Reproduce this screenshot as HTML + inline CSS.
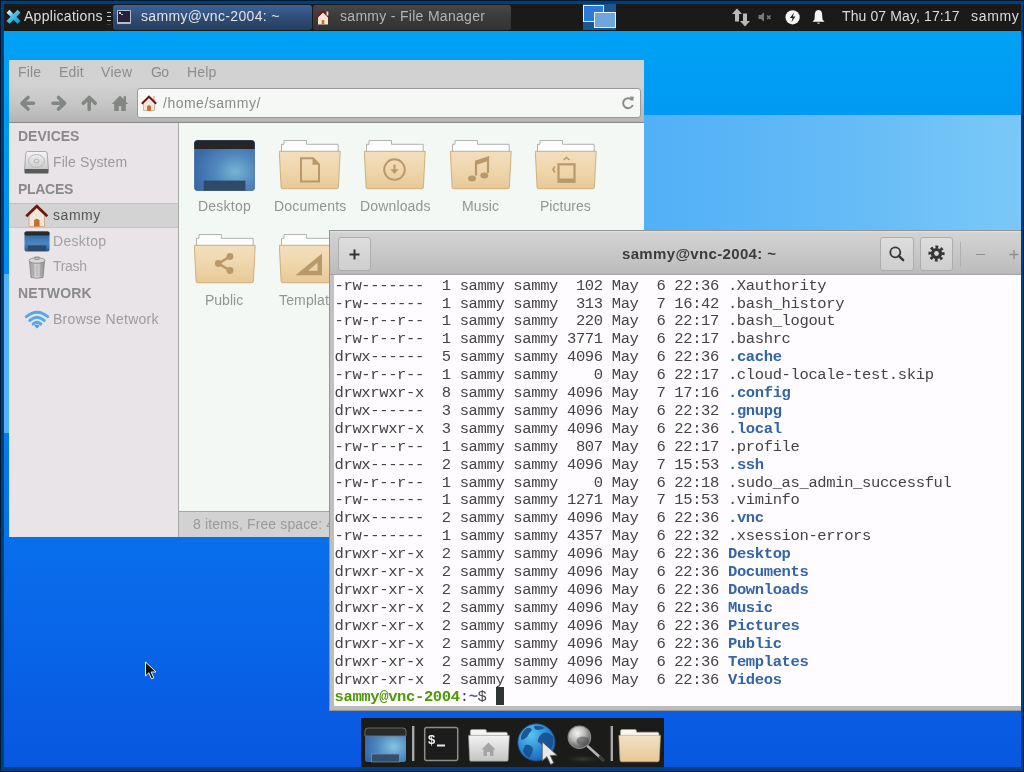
<!DOCTYPE html>
<html><head><meta charset="utf-8">
<style>
*{margin:0;padding:0;box-sizing:border-box}
html,body{width:1024px;height:772px;overflow:hidden;background:#001a33}
body{position:relative;font-family:"Liberation Sans",sans-serif}
.abs{position:absolute}
.ftxt{position:absolute;white-space:nowrap;line-height:15px;font-size:14px;letter-spacing:0.2px}
#frame{position:absolute;left:1px;top:1px;width:1022px;height:770px;background:#003f7e}
#desk{position:absolute;left:4px;top:4px;width:1017px;height:763px;background:linear-gradient(#00a2f5 0px,#00a2f5 27px,#0870ec 533px,#0857e0 763px)}
#panel{position:absolute;left:4px;top:4px;width:1017px;height:27px;background:#1a1b19;color:#dcdcdc;font-size:13.5px}
.ptxt{position:absolute;top:9px;white-space:nowrap;line-height:15px;font-size:14px;color:#dcdcdc;letter-spacing:0.3px}
#band{position:absolute;left:644px;top:115px;width:377px;height:116px;background:linear-gradient(90deg,#52b0f6,#63baf6 50%,#7ac8f8)}
#fm{position:absolute;left:9px;top:60px;width:635px;height:477px;background:#e8e4e6;overflow:hidden}
#tt{font-family:"Liberation Mono",monospace;font-size:15.5px;letter-spacing:-0.36px;line-height:17.91px;color:#444444;white-space:pre;margin:0}
#tt b{color:#3465a4;font-weight:bold}
#tt b.g{color:#4e9a06}
#tt .cur{background:#2e3436;display:inline-block;width:8.94px;height:17.4px;vertical-align:top}
#dock{position:absolute;left:361px;top:718px;width:303px;height:49px;background:#1b1c1a}
#wrap{position:absolute;left:0;top:0;width:1024px;height:772px;filter:blur(0.3px)}
</style></head><body><div id="wrap">
<div id="frame"></div>
<div id="desk"></div>
<div id="band"></div>
<div class="abs" style="left:4px;top:274px;width:5px;height:159px;background:#52b2f6"></div>
<div id="panel"></div>
<!-- panel content -->
<svg class="abs" style="left:5px;top:9px" width="18" height="17" viewBox="0 0 18 17">
<defs><linearGradient id="xg" x1="0.05" y1="0.05" x2="0.8" y2="0.8"><stop offset="0" stop-color="#f0fbff"/><stop offset="0.45" stop-color="#56c6ee"/><stop offset="1" stop-color="#10a6dc"/></linearGradient></defs>
<path fill="url(#xg)" d="M1.5 3.82 L4.47 0.85 L8.5 4.88 L12.53 0.85 L15.5 3.82 L11.47 7.85 L15.5 11.88 L12.53 14.85 L8.5 10.82 L4.47 14.85 L1.5 11.88 L5.53 7.85 Z"/>
</svg>
<div class="ptxt" id="t-apps" style="left:24px;letter-spacing:0.28px">Applications</div>
<div class="abs" style="left:107px;top:12px;width:4px;height:1px;background:#c8c8c8"></div>
<div class="abs" style="left:107px;top:16px;width:4px;height:1px;background:#c8c8c8"></div>
<div class="abs" style="left:107px;top:20px;width:4px;height:1px;background:#c0c0c0"></div>
<div class="abs" style="left:107px;top:24px;width:4px;height:1px;background:#3a3a3a"></div>
<div class="abs" style="left:113px;top:5px;width:199px;height:25px;border-radius:3px;background:linear-gradient(#3d6399,#2f4d76 50%,#263e5c)"></div>
<div class="abs" style="left:117px;top:10px;width:14px;height:14px;border:1px solid #b8bcc8;border-bottom-width:2px;border-radius:1px;background:#2a1f38"></div>
<div class="abs" style="left:119px;top:12px;width:2px;height:2px;background:#cfcfcf"></div>
<div class="abs" style="left:121px;top:14px;width:2px;height:1px;background:#cfcfcf"></div>
<div class="ptxt" id="t-term" style="left:141px;color:#e4e4e4;letter-spacing:0.35px">sammy@vnc-2004: ~</div>
<div class="abs" style="left:313px;top:5px;width:198px;height:25px;border-radius:3px;background:linear-gradient(#474747,#3a3a3a 50%,#333333)"></div>
<svg class="abs" style="left:315px;top:9px" width="16" height="16" viewBox="0 0 16 16">
<path d="M3 8 L3 15.5 L13 15.5 L13 8 L8 3.5 Z" fill="#f3e6d8"/>
<path d="M1 9 L8 2.2 L15 9" fill="none" stroke="#7a1a14" stroke-width="1.8"/>
<rect x="11.5" y="2.5" width="1.8" height="4" fill="#f0e0d0"/>
<path d="M6.7 15.5 L6.7 11.5 Q8 10 9.3 11.5 L9.3 15.5 Z" fill="#c87030"/>
</svg>
<div class="ptxt" id="t-fm" style="left:340px;color:#b4b4b4;letter-spacing:0.3px">sammy - File Manager</div>
<div class="abs" style="left:583px;top:4px;width:33px;height:26px;background:#1d5790"></div>
<div class="abs" style="left:583px;top:5px;width:21px;height:17px;border:1px solid #f0f0f0;background:#2a7ad6"></div>
<div class="abs" style="left:594px;top:12px;width:22px;height:16px;border:1px solid #f0f0f0;background:#6fa6dd"></div>
<!-- tray -->
<svg class="abs" style="left:731px;top:8px" width="20" height="19" viewBox="0 0 20 19">
<path d="M1 6 L6 0.5 L11 6 L8 6 L8 13.5 L4 13.5 L4 6 Z" fill="#b9b9b9"/>
<path d="M9 13 L14 18.5 L19 13 L16 13 L16 5.5 L12 5.5 L12 13 Z" fill="#b9b9b9"/>
</svg>
<svg class="abs" style="left:758px;top:12px" width="14" height="10" viewBox="0 0 14 10">
<path d="M0.5 3 L3 3 L6 0.3 L6 9.7 L3 7 L0.5 7 Z" fill="#7a7a7a"/>
<path d="M9 3.5 L12.5 7 M12.5 3.5 L9 7" stroke="#7a7a7a" stroke-width="1.5"/>
</svg>
<svg class="abs" style="left:785px;top:10px" width="16" height="15" viewBox="0 0 16 15">
<circle cx="7.6" cy="7.3" r="7.1" fill="#f4f4f4"/>
<path d="M9 2.5 L5 8 L7.6 8 L6.4 12.3 L10.4 6.5 L7.8 6.5 Z" fill="#1a1b19"/>
</svg>
<svg class="abs" style="left:812px;top:9px" width="14" height="16" viewBox="0 0 14 16">
<path d="M6.5 1 C3.5 1 2.8 3.8 2.8 6.5 L2.5 10.5 L0.5 12.8 L12.5 12.8 L10.5 10.5 L10.2 6.5 C10.2 3.8 9.5 1 6.5 1 Z" fill="#f6f6f6"/>
<path d="M4.8 13.8 L8.2 13.8 Q6.5 15.6 4.8 13.8 Z" fill="#f6f6f6"/>
</svg>
<div class="ptxt" id="t-clock" style="left:842px;letter-spacing:0.11px">Thu 07 May, 17:17</div>
<div class="ptxt" id="t-user" style="left:971px;letter-spacing:0.67px">sammy</div>

<div id="fm"></div>
<!-- FM -->
<div class="abs" style="left:9px;top:60px;width:635px;height:25px;background:#d2d2d2"></div>
<div class="abs" style="left:9px;top:85px;width:635px;height:37px;background:linear-gradient(#d2d2d2,#c6c6c6 50%,#b4b4b4)"></div>
<div class="abs" style="left:9px;top:121.6px;width:635px;height:1.6px;background:#888888"></div>
<div class="ftxt" style="left:18px;top:65px;color:#8c8c8c">File</div>
<div class="ftxt" style="left:59px;top:65px;color:#8c8c8c">Edit</div>
<div class="ftxt" style="left:101px;top:65px;color:#8c8c8c;letter-spacing:0.3px">View</div>
<div class="ftxt" style="left:151px;top:65px;color:#8c8c8c;letter-spacing:-0.6px">Go</div>
<div class="ftxt" style="left:187px;top:65px;color:#8c8c8c">Help</div>
<svg class="abs" style="left:9px;top:85px" width="130" height="36" viewBox="9 85 130 36">
<g fill="none" stroke="#838783" stroke-width="3.6" stroke-linecap="round" stroke-linejoin="round">
<path d="M28 97.5 L21.9 103.2 L28 109 M22.5 103.2 L33.5 103.2"/>
<path d="M58.5 97.5 L64.6 103.2 L58.5 109 M64 103.2 L53 103.2"/>
<path d="M83.3 103.3 L89.2 97.5 L95.2 103.3 M89.2 98.5 L89.2 109.5"/>
</g>
<path d="M111.8 104 L120 95.6 L123.5 99.2 L123.5 96.3 L126 96.3 L126 101.7 L128.3 104 L125.8 104 L125.8 110.9 L121.2 110.9 L121.2 106 L118.8 106 L118.8 110.9 L114.2 110.9 L114.2 104 Z" fill="#838783"/>
</svg>
<div class="abs" style="left:137px;top:88.3px;width:504px;height:29.5px;border:1px solid #999a99;border-radius:3px;background:#f5f8f4"></div>
<svg class="abs" style="left:141px;top:95px" width="17" height="17" viewBox="0 0 17 17">
<path d="M2.5 8 L2.5 15.5 L13.5 15.5 L13.5 8 L8 3 Z" fill="#f1e6da" stroke="#c8a88a" stroke-width="0.8"/>
<rect x="12" y="1" width="2" height="5" fill="#e0c8b0"/>
<path d="M0.8 8.8 L8 1.6 L15.2 8.8" fill="none" stroke="#6d1414" stroke-width="2"/>
<path d="M6 15.8 L6 11.3 Q8 9 10 11.3 L10 15.8 Z" fill="#c66e2c"/>
</svg>
<div class="ftxt" style="left:163px;top:96px;color:#8a8a8a;letter-spacing:0.5px">/home/sammy/</div>
<svg class="abs" style="left:620px;top:95px" width="16" height="16" viewBox="0 0 16 16">
<path d="M12.2 5.2 A5 5 0 1 0 12.8 10" fill="none" stroke="#8a8a8a" stroke-width="2"/>
<path d="M9.5 1.5 L13.8 1.8 L13.2 6.3 Z" fill="#8a8a8a"/>
</svg>
<div class="abs" style="left:9px;top:123px;width:169px;height:414px;background:#e8e4e7"></div>
<div class="abs" style="left:178px;top:123px;width:1px;height:388px;background:#a9a9a9"></div>
<div class="abs" style="left:179px;top:123px;width:465px;height:388px;background:#f4f8f4"></div>
<div class="abs" style="left:178px;top:511px;width:466px;height:26px;background:#d2d2d2;border-top:1px solid #a4a4a4;border-left:1px solid #a9a9a9"></div>
<svg width="0" height="0" style="position:absolute"><defs>
<linearGradient id="fg" x1="0" y1="0" x2="0" y2="1"><stop offset="0" stop-color="#f3dfbe"/><stop offset="0.5" stop-color="#efd6ac"/><stop offset="1" stop-color="#e8c995"/></linearGradient>
<radialGradient id="dg" cx="0.68" cy="0.62" r="0.7"><stop offset="0" stop-color="#76b4d2"/><stop offset="0.5" stop-color="#4f86bc"/><stop offset="1" stop-color="#3a68a8"/></radialGradient>
</defs></svg>
<svg class="abs" style="left:194px;top:140px" width="61" height="51" viewBox="0 0 61 51">
<rect x="0.3" y="0.3" width="60.4" height="50.4" rx="3.5" fill="url(#dg)" stroke="#2e5a90" stroke-width="0.6"/>
<path d="M0.3 9 L0.3 3.8 Q0.3 0.3 3.8 0.3 L57.2 0.3 Q60.7 0.3 60.7 3.8 L60.7 9 Z" fill="#262626"/>
<rect x="9.7" y="40.6" width="41.7" height="10.1" fill="#2f4a68"/>
</svg>
<svg class="abs" style="left:279px;top:140px" width="62" height="52" viewBox="0 0 62 52">
<path d="M2.5 12 L2.5 4.3 L5 4.3 L5 0.5 L27.5 0.5 L27.5 4.3 L59.2 4.3 L59.2 12 Z" fill="#fdfdfd" stroke="#a9a9a9" stroke-width="0.9"/>
<path d="M0.3 11.3 L61.2 11.3 L59.4 47.3 Q59.3 48.7 57.8 48.7 L3.7 48.7 Q2.2 48.7 2.1 47.3 Z" fill="url(#fg)" stroke="#c9a978" stroke-width="0.9"/>
<g fill="#b9996a" stroke="#b9996a"><path d="M22 18.3 L34 18.3 L40 24.5 L40 41.5 L22 41.5 Z" fill="none" stroke-width="2"/><path d="M33.5 18.3 L40 24.8 L33.5 24.8 Z" stroke="none"/></g>
</svg><svg class="abs" style="left:364px;top:140px" width="62" height="52" viewBox="0 0 62 52">
<path d="M2.5 12 L2.5 4.3 L5 4.3 L5 0.5 L27.5 0.5 L27.5 4.3 L59.2 4.3 L59.2 12 Z" fill="#fdfdfd" stroke="#a9a9a9" stroke-width="0.9"/>
<path d="M0.3 11.3 L61.2 11.3 L59.4 47.3 Q59.3 48.7 57.8 48.7 L3.7 48.7 Q2.2 48.7 2.1 47.3 Z" fill="url(#fg)" stroke="#c9a978" stroke-width="0.9"/>
<g fill="#b9996a" stroke="#b9996a"><circle cx="30.5" cy="29.6" r="10.3" fill="none" stroke-width="1.9"/><path d="M30.5 24.5 L30.5 30" fill="none" stroke-width="2"/><path d="M26.3 29.3 L34.7 29.3 L30.5 34 Z" stroke="none"/></g>
</svg><svg class="abs" style="left:450px;top:140px" width="62" height="52" viewBox="0 0 62 52">
<path d="M2.5 12 L2.5 4.3 L5 4.3 L5 0.5 L27.5 0.5 L27.5 4.3 L59.2 4.3 L59.2 12 Z" fill="#fdfdfd" stroke="#a9a9a9" stroke-width="0.9"/>
<path d="M0.3 11.3 L61.2 11.3 L59.4 47.3 Q59.3 48.7 57.8 48.7 L3.7 48.7 Q2.2 48.7 2.1 47.3 Z" fill="url(#fg)" stroke="#c9a978" stroke-width="0.9"/>
<g fill="#b9996a" stroke="#b9996a"><path d="M26 35.5 L26 21.5 L38 17.5 L38 33" fill="none" stroke-width="2.2"/><path d="M26 21.5 L38 17.5 L38 21 L26 25 Z" stroke="none"/><ellipse cx="22" cy="38.5" rx="4" ry="3" stroke="none"/><ellipse cx="34.3" cy="35.5" rx="4" ry="3" stroke="none"/></g>
</svg><svg class="abs" style="left:535px;top:140px" width="62" height="52" viewBox="0 0 62 52">
<path d="M2.5 12 L2.5 4.3 L5 4.3 L5 0.5 L27.5 0.5 L27.5 4.3 L59.2 4.3 L59.2 12 Z" fill="#fdfdfd" stroke="#a9a9a9" stroke-width="0.9"/>
<path d="M0.3 11.3 L61.2 11.3 L59.4 47.3 Q59.3 48.7 57.8 48.7 L3.7 48.7 Q2.2 48.7 2.1 47.3 Z" fill="url(#fg)" stroke="#c9a978" stroke-width="0.9"/>
<g fill="#b9996a" stroke="#b9996a"><rect x="23.5" y="24.3" width="16" height="17.5" fill="none" stroke-width="2.2"/><rect x="23.5" y="38.5" width="16" height="3.5" stroke="none"/><path d="M28.5 20 L31.5 17.5 L34.5 20" fill="none" stroke-width="1.6"/><path d="M20 26.5 L18 29.5 L20 32.5" fill="none" stroke-width="1.6"/></g>
</svg><svg class="abs" style="left:194px;top:234px" width="62" height="52" viewBox="0 0 62 52">
<path d="M2.5 12 L2.5 4.3 L5 4.3 L5 0.5 L27.5 0.5 L27.5 4.3 L59.2 4.3 L59.2 12 Z" fill="#fdfdfd" stroke="#a9a9a9" stroke-width="0.9"/>
<path d="M0.3 11.3 L61.2 11.3 L59.4 47.3 Q59.3 48.7 57.8 48.7 L3.7 48.7 Q2.2 48.7 2.1 47.3 Z" fill="url(#fg)" stroke="#c9a978" stroke-width="0.9"/>
<g fill="#b9996a" stroke="#b9996a"><path d="M36 22.5 L24.5 29.5 L36 36.5" fill="none" stroke-width="2.6"/><circle cx="36" cy="22.5" r="3.4" stroke="none"/><circle cx="24.3" cy="29.5" r="3.4" stroke="none"/><circle cx="36" cy="36.5" r="3.4" stroke="none"/></g>
</svg><svg class="abs" style="left:279px;top:234px" width="62" height="52" viewBox="0 0 62 52">
<path d="M2.5 12 L2.5 4.3 L5 4.3 L5 0.5 L27.5 0.5 L27.5 4.3 L59.2 4.3 L59.2 12 Z" fill="#fdfdfd" stroke="#a9a9a9" stroke-width="0.9"/>
<path d="M0.3 11.3 L61.2 11.3 L59.4 47.3 Q59.3 48.7 57.8 48.7 L3.7 48.7 Q2.2 48.7 2.1 47.3 Z" fill="url(#fg)" stroke="#c9a978" stroke-width="0.9"/>
<g fill="#b9996a" stroke="#b9996a"><path d="M16.5 41.3 L43 19.5 L43 41.3 Z M29 36.8 L38.5 36.8 L38.5 28.8 Z" fill-rule="evenodd" stroke="none"/></g>
</svg>
<div class="ftxt" style="left:198px;top:199px;color:#939393;letter-spacing:0.22px">Desktop</div>
<div class="ftxt" style="left:274px;top:199px;color:#939393;letter-spacing:0.19px">Documents</div>
<div class="ftxt" style="left:360px;top:199px;color:#939393;letter-spacing:0.15px">Downloads</div>
<div class="ftxt" style="left:462px;top:199px;color:#939393;letter-spacing:0.1px">Music</div>
<div class="ftxt" style="left:540px;top:199px;color:#939393;letter-spacing:0.02px">Pictures</div>
<div class="ftxt" style="left:205px;top:293px;color:#939393;letter-spacing:0px">Public</div>
<div class="ftxt" style="left:279px;top:293px;color:#939393;letter-spacing:0.15px">Templates</div>
<div class="ftxt" style="left:193px;top:517px;color:#9a9a9a;letter-spacing:0.12px">8 items, Free space: 4.2 GB</div>
<div class="abs" style="left:9px;top:203px;width:169px;height:25px;background:#d3d3d3;border-top:1px solid #c2c2c2;border-bottom:1px solid #c6c6c6"></div>
<div class="ftxt" style="left:18px;top:129px;color:#8a8a8a;font-weight:bold;letter-spacing:0px">DEVICES</div>
<div class="ftxt" style="left:53px;top:155px;color:#9c9c9c;letter-spacing:0.1px">File System</div>
<div class="ftxt" style="left:18px;top:182px;color:#8a8a8a;font-weight:bold;letter-spacing:-0.3px">PLACES</div>
<div class="ftxt" style="left:53px;top:208px;color:#555555;letter-spacing:0.55px">sammy</div>
<div class="ftxt" style="left:53px;top:234px;color:#a2a2a2;letter-spacing:0.3px">Desktop</div>
<div class="ftxt" style="left:53px;top:259px;color:#a2a2a2;letter-spacing:-0.3px">Trash</div>
<div class="ftxt" style="left:18px;top:286px;color:#8a8a8a;font-weight:bold;letter-spacing:0.23px">NETWORK</div>
<div class="ftxt" style="left:53px;top:312px;color:#9c9c9c;letter-spacing:0.28px">Browse Network</div>
<!-- sidebar icons -->
<svg class="abs" style="left:24px;top:150px" width="26" height="25" viewBox="0 0 26 25">
<defs><linearGradient id="hd" x1="0" y1="0" x2="0" y2="1"><stop offset="0" stop-color="#f4f4f4"/><stop offset="1" stop-color="#c8c8c8"/></linearGradient></defs>
<path d="M3.5 1.5 L21.5 1.5 Q23 1.5 23.2 3 L24.5 20 L0.5 20 L1.8 3 Q2 1.5 3.5 1.5 Z" fill="url(#hd)" stroke="#9a9a9a" stroke-width="0.8"/>
<ellipse cx="12.5" cy="11" rx="8" ry="6.5" fill="none" stroke="#b8b8b8" stroke-width="1"/>
<ellipse cx="12.5" cy="11" rx="2.5" ry="1.8" fill="none" stroke="#a8a8a8" stroke-width="0.8"/>
<rect x="0.5" y="19" width="24" height="4.5" rx="1" fill="#5a5a5a"/>
</svg>
<svg class="abs" style="left:25px;top:204px" width="24" height="24" viewBox="0 0 24 24">
<path d="M4 11 L4 22.5 L19.5 22.5 L19.5 11 L11.8 4 Z" fill="#f1e6da" stroke="#caa888" stroke-width="0.9"/>
<rect x="16" y="2.5" width="2.6" height="6" fill="#e3cdb5"/>
<path d="M1.3 12.3 L11.8 2 L22.3 12.3" fill="none" stroke="#6d1414" stroke-width="2.6"/>
<path d="M9 22.6 L9 16.5 Q11.8 13.2 14.6 16.5 L14.6 22.6 Z" fill="#c66e2c"/>
</svg>
<svg class="abs" style="left:24px;top:231px" width="26" height="21" viewBox="0 0 26 21">
<defs><linearGradient id="dsk" x1="0" y1="0" x2="0" y2="1"><stop offset="0" stop-color="#2f62a0"/><stop offset="0.6" stop-color="#4a86c0"/><stop offset="1" stop-color="#2a5890"/></linearGradient></defs>
<rect x="0.5" y="0.5" width="25" height="20" rx="2" fill="url(#dsk)"/>
<rect x="0.5" y="0.5" width="25" height="4" rx="1.5" fill="#2a2a2a"/>
<rect x="4" y="14.5" width="18" height="5.5" fill="#2c4a6a"/>
</svg>
<svg class="abs" style="left:28px;top:256px" width="18" height="23" viewBox="0 0 18 23">
<defs><linearGradient id="tr" x1="0" y1="0" x2="1" y2="0"><stop offset="0" stop-color="#9a9a9a"/><stop offset="0.5" stop-color="#dcdcdc"/><stop offset="1" stop-color="#8a8a8a"/></linearGradient></defs>
<path d="M1.5 5 L16.5 5 L15 21.5 Q9 23 3 21.5 Z" fill="url(#tr)" stroke="#7a7a7a" stroke-width="0.7"/>
<ellipse cx="9" cy="4.5" rx="8" ry="2.8" fill="#d8d8d8" stroke="#808080" stroke-width="0.8"/>
<rect x="7" y="1" width="4" height="2.5" fill="none" stroke="#888" stroke-width="0.8"/>
<path d="M5 8 L5.5 20 M9 8.5 L9 20.5 M13 8 L12.5 20" stroke="#9a9a9a" stroke-width="0.8"/>
</svg>
<svg class="abs" style="left:24px;top:309px" width="26" height="21" viewBox="0 0 26 21">
<g fill="none" stroke="#56a8ee" stroke-linecap="round">
<path d="M2.3 7.6 Q13 -1.2 23.7 7.6" stroke-width="3"/>
<path d="M5.8 11.4 Q13 5.2 20.2 11.4" stroke-width="3"/>
<path d="M9.2 15 Q13 11.8 16.8 15" stroke-width="3"/>
</g>
<path d="M10.3 16.8 L13 19.6 L15.7 16.8 Q13 14.8 10.3 16.8 Z" fill="#4a9ce6"/>
</svg>

<div id="term"></div>
<div class="abs" style="left:329px;top:230.4px;width:692px;height:480.6px;background:linear-gradient(#c4c4c4,#bcbcbc);border:1px solid #959595;border-right:none"></div>
<div class="abs" style="left:330px;top:231px;width:691px;height:44px;background:linear-gradient(#e2e2e2 0px,#d2d2d2 2px,#c8c8c8 50%,#bababa)"></div>
<div class="abs" style="left:330px;top:274px;width:691px;height:1px;background:#a4a4a4"></div>
<div class="abs" style="left:338px;top:237px;width:33px;height:34px;border:1px solid #adadad;border-radius:3px;background:linear-gradient(#dedede,#d6d6d6 50%,#cecece)"></div>
<svg class="abs" style="left:348px;top:248px" width="13" height="13" viewBox="0 0 13 13"><path d="M6.5 1.5 L6.5 11.5 M1.5 6.5 L11.5 6.5" stroke="#333" stroke-width="2"/></svg>
<div class="abs" style="left:622px;top:246px;font:bold 15px 'Liberation Sans',sans-serif;line-height:15px;color:#3c3c3c;letter-spacing:0.34px;white-space:nowrap">sammy@vnc-2004: ~</div>
<div class="abs" style="left:880px;top:237px;width:34px;height:34px;border:1px solid #adadad;border-radius:3px;background:linear-gradient(#dedede,#d6d6d6 50%,#cecece)"></div>
<svg class="abs" style="left:888px;top:245px" width="18" height="18" viewBox="0 0 18 18"><circle cx="7.3" cy="7.3" r="5" fill="none" stroke="#363636" stroke-width="1.8"/><path d="M10.8 10.8 L15.2 15.2" stroke="#363636" stroke-width="2.4" stroke-linecap="round"/></svg>
<div class="abs" style="left:920px;top:237px;width:33px;height:34px;border:1px solid #adadad;border-radius:3px;background:linear-gradient(#dedede,#d6d6d6 50%,#cecece)"></div>
<svg class="abs" style="left:927px;top:244px" width="19" height="19" viewBox="0 0 19 19"><circle cx="9.5" cy="9.5" r="5.6" fill="#363636"/><circle cx="9.5" cy="9.5" r="6.6" fill="none" stroke="#363636" stroke-width="3" stroke-dasharray="2.7 2.484" transform="rotate(-10.5 9.5 9.5)"/><circle cx="9.5" cy="9.5" r="2.4" fill="#d8d8d8"/></svg>
<div class="abs" style="left:960px;top:242px;width:1px;height:25px;background:#b0b0b0"></div>
<div class="abs" style="left:976px;top:253.5px;width:9px;height:1.4px;background:#8e8e8e"></div>
<svg class="abs" style="left:1008px;top:248px" width="13" height="13" viewBox="0 0 13 13"><path d="M6 2 L6 11 M1.5 6.5 L10.5 6.5" stroke="#8e8e8e" stroke-width="1.4"/></svg>
<div class="abs" style="left:334px;top:275px;width:687px;height:431px;background:#fefcfe"></div>
<pre class="abs" id="tt" style="left:334.5px;top:277.6px">-rw-------  1 sammy sammy  102 May  6 22:36 .Xauthority
-rw-------  1 sammy sammy  313 May  7 16:42 .bash_history
-rw-r--r--  1 sammy sammy  220 May  6 22:17 .bash_logout
-rw-r--r--  1 sammy sammy 3771 May  6 22:17 .bashrc
drwx------  5 sammy sammy 4096 May  6 22:36 <b>.cache</b>
-rw-r--r--  1 sammy sammy    0 May  6 22:17 .cloud-locale-test.skip
drwxrwxr-x  8 sammy sammy 4096 May  7 17:16 <b>.config</b>
drwx------  3 sammy sammy 4096 May  6 22:32 <b>.gnupg</b>
drwxrwxr-x  3 sammy sammy 4096 May  6 22:36 <b>.local</b>
-rw-r--r--  1 sammy sammy  807 May  6 22:17 .profile
drwx------  2 sammy sammy 4096 May  7 15:53 <b>.ssh</b>
-rw-r--r--  1 sammy sammy    0 May  6 22:18 .sudo_as_admin_successful
-rw-------  1 sammy sammy 1271 May  7 15:53 .viminfo
drwx------  2 sammy sammy 4096 May  6 22:36 <b>.vnc</b>
-rw-------  1 sammy sammy 4357 May  6 22:32 .xsession-errors
drwxr-xr-x  2 sammy sammy 4096 May  6 22:36 <b>Desktop</b>
drwxr-xr-x  2 sammy sammy 4096 May  6 22:36 <b>Documents</b>
drwxr-xr-x  2 sammy sammy 4096 May  6 22:36 <b>Downloads</b>
drwxr-xr-x  2 sammy sammy 4096 May  6 22:36 <b>Music</b>
drwxr-xr-x  2 sammy sammy 4096 May  6 22:36 <b>Pictures</b>
drwxr-xr-x  2 sammy sammy 4096 May  6 22:36 <b>Public</b>
drwxr-xr-x  2 sammy sammy 4096 May  6 22:36 <b>Templates</b>
drwxr-xr-x  2 sammy sammy 4096 May  6 22:36 <b>Videos</b>
<b class="g">sammy@vnc-2004</b>:<b>~</b>$ </pre>
<div class="abs" style="left:495.6px;top:687.4px;width:8.8px;height:17.2px;background:#2e3436"></div>

<div id="dock"></div>
<svg class="abs" style="left:361px;top:718px" width="303" height="49" viewBox="361 718 303 49">
<defs>
<radialGradient id="sd" cx="0.7" cy="0.55" r="0.75"><stop offset="0" stop-color="#86c4e0"/><stop offset="0.55" stop-color="#4d88c0"/><stop offset="1" stop-color="#3566a8"/></radialGradient>
<linearGradient id="gf" x1="0" y1="0" x2="0" y2="1"><stop offset="0" stop-color="#f2f2f2"/><stop offset="1" stop-color="#c4c4c4"/></linearGradient>
<linearGradient id="tf" x1="0" y1="0" x2="0" y2="1"><stop offset="0" stop-color="#f2e0c4"/><stop offset="1" stop-color="#e8c896"/></linearGradient>
<radialGradient id="glb" cx="0.35" cy="0.3" r="0.8"><stop offset="0" stop-color="#58c4f0"/><stop offset="0.6" stop-color="#2a86d2"/><stop offset="1" stop-color="#1c5ca8"/></radialGradient>
<radialGradient id="lens" cx="0.4" cy="0.32" r="0.7"><stop offset="0" stop-color="#f4f4f4"/><stop offset="0.5" stop-color="#b8b8b8"/><stop offset="1" stop-color="#505050"/></radialGradient>
<radialGradient id="shd" cx="0.5" cy="0.5" r="0.5"><stop offset="0" stop-color="#3c3c3c"/><stop offset="1" stop-color="#1c1c1c" stop-opacity="0"/></radialGradient>
</defs>
<!-- show desktop -->
<rect x="365" y="728" width="41" height="34" rx="2.5" fill="url(#sd)"/>
<path d="M365 736 L365 731 Q365 728 368 728 L403 728 Q406 728 406 731 L406 736 Z" fill="#2a2a2a" stroke="#777" stroke-width="0.8"/>
<rect x="371.5" y="754" width="28" height="8" fill="#34506c" stroke="#7aa0c0" stroke-width="0.6"/>
<rect x="412" y="726" width="2.4" height="35" fill="#a8a8a8"/>
<!-- terminal -->
<rect x="424.7" y="727.4" width="33" height="33.2" rx="2" fill="#1c1c1c" stroke="#8c8c8c" stroke-width="1.5"/>
<text x="428" y="743.5" font-family="Liberation Sans" font-weight="bold" font-size="13" fill="#f0f0f0">$</text>
<rect x="437" y="744.5" width="8" height="2" fill="#e8e8e8"/>
<!-- home folder gray -->
<path d="M470.3 737 L470.3 731 Q470.3 729.5 472 729.5 L485 729.5 Q486.5 729.5 486.5 731 L486.5 732.2 L506 732.2 Q507.5 732.2 507.5 734 L507.5 737 Z" fill="#f4f4f4" stroke="#9a9a9a" stroke-width="0.6"/>
<path d="M468.5 735.4 L509.4 735.4 L508.2 760 Q508 761.2 506.8 761.2 L471 761.2 Q469.8 761.2 469.6 760 Z" fill="url(#gf)" stroke="#8a8a8a" stroke-width="0.6"/>
<path d="M481.5 749.5 L488.5 742.5 L495.5 749.5 L493.5 749.5 L493.5 756 L490 756 L490 752 L487 752 L487 756 L483.5 756 L483.5 749.5 Z" fill="#a4a4a4"/>
<!-- globe -->
<circle cx="536.4" cy="742.4" r="18.6" fill="url(#glb)" stroke="#174a86" stroke-width="0.8"/>
<g fill="#184f90" opacity="0.9">
<path d="M521 737 Q522 731 527 728 Q531 727 532 730 Q529 733 527 737 Q524 740 521 740 Z"/>
<path d="M534 726 Q540 725 545 728 Q541 730 537 730 Q534 729 534 726 Z"/>
<path d="M543 733 Q549 731 553 737 Q554 744 551 749 Q547 752 544 748 Q541 743 538 742 Q537 737 543 733 Z"/>
<path d="M525 745 Q531 744 533 749 Q532 755 529 758 Q525 756 523 751 Z"/>
</g>
<!-- cursor over globe -->
<path d="M542.3 741.9 L542.3 761 L546.8 756.6 L550.6 764.4 L553.7 763 L550.3 755.4 L557 755.2 Z" fill="#e8e8e8" stroke="#555" stroke-width="0.7"/>
<!-- magnifier -->
<ellipse cx="583" cy="759" rx="20" ry="4.5" fill="url(#shd)"/>
<path d="M588 746.5 L602.5 759.5" stroke="#b4b4b4" stroke-width="2.6" stroke-linecap="round"/>
<path d="M600 757.2 L603.5 760.5" stroke="#3a3a3a" stroke-width="3" stroke-linecap="round"/>
<circle cx="579.4" cy="737.2" r="11.2" fill="url(#lens)" stroke="#8a8a8a" stroke-width="1.2"/>
<ellipse cx="583" cy="741" rx="6.5" ry="4.5" fill="#4a4a4a" opacity="0.55"/>
<rect x="610.6" y="726" width="2.4" height="35" fill="#a8a8a8"/>
<!-- tan folder -->
<path d="M620.5 737 L620.5 731 Q620.5 729.5 622 729.5 L635 729.5 Q636.5 729.5 636.5 731 L636.5 732.2 L657.5 732.2 Q659 732.2 659 734 L659 737 Z" fill="#f8f6f2" stroke="#b0a890" stroke-width="0.6"/>
<path d="M618.8 735.4 L660.5 735.4 L659.3 760 Q659.1 761.8 657.8 761.8 L621.5 761.8 Q620.2 761.8 620 760 Z" fill="url(#tf)" stroke="#c0a070" stroke-width="0.6"/>
</svg>
<!-- mouse pointer on desktop -->
<svg class="abs" style="left:144px;top:661px" width="14" height="20" viewBox="0 0 14 20">
<path d="M1.5 1 L1.5 15 L4.8 11.8 L7.5 17.8 L9.8 16.8 L7.2 11 L12 11 Z" fill="#111" stroke="#f4f4f4" stroke-width="1"/>
</svg>

</div></body></html>
